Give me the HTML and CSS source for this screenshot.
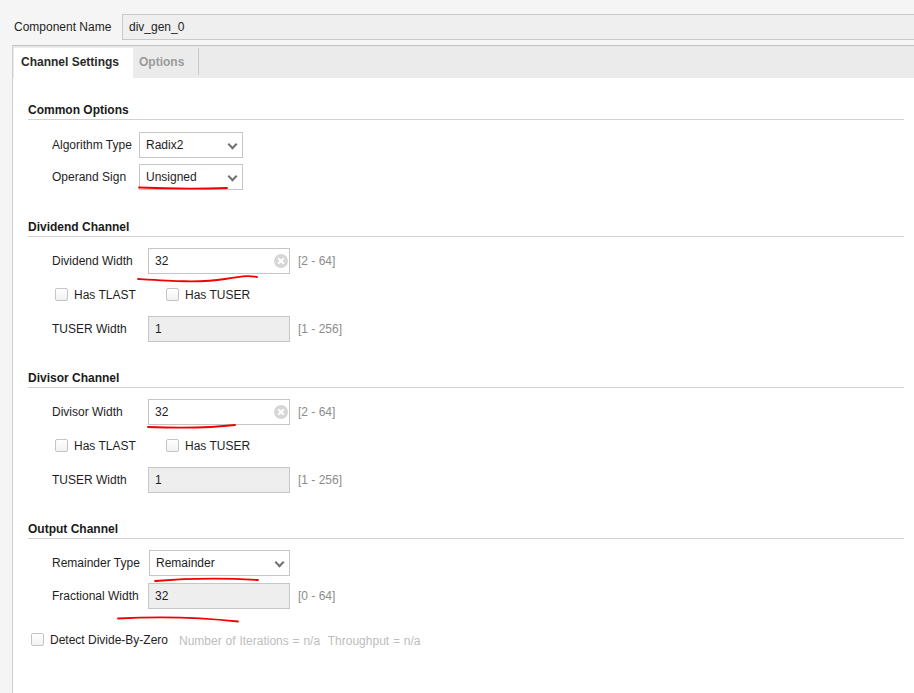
FILE: index.html
```html
<!DOCTYPE html>
<html lang="en">
<head>
    <meta charset="UTF-8">
    <title>div_gen_0</title>
    <link rel="stylesheet" href="styles.css">
</head>
<body>
    <div class="name-row">
        <span class="name-label">Component Name</span>
        <div class="name-field">div_gen_0</div>
    </div>

    <div class="panel">
        <div class="tabs">
            <div class="tab active">Channel Settings</div>
            <div class="tab">Options</div>
        </div>

        <div class="content">
            <div class="section first">
                <div class="section-title">Common Options</div>
                <div class="fields lw-87">
                    <div class="row">
                        <span class="label">Algorithm Type</span>
                        <div class="select small">Radix2<span class="chev"></span></div>
                    </div>
                    <div class="row">
                        <span class="label">Operand Sign</span>
                        <div class="select small">Unsigned<span class="chev"></span></div>
                    </div>
                </div>
            </div>

            <div class="section">
                <div class="section-title">Dividend Channel</div>
                <div class="fields lw-96">
                    <div class="row">
                        <span class="label">Dividend Width</span>
                        <div class="input">32<span class="clear"></span></div>
                        <span class="range">[2 - 64]</span>
                    </div>
                    <div class="checks">
                        <label class="check"><span class="box"></span>Has TLAST</label>
                        <label class="check"><span class="box"></span>Has TUSER</label>
                    </div>
                    <div class="row">
                        <span class="label">TUSER Width</span>
                        <div class="input disabled">1</div>
                        <span class="range">[1 - 256]</span>
                    </div>
                </div>
            </div>

            <div class="section">
                <div class="section-title">Divisor Channel</div>
                <div class="fields lw-96">
                    <div class="row">
                        <span class="label">Divisor Width</span>
                        <div class="input">32<span class="clear"></span></div>
                        <span class="range">[2 - 64]</span>
                    </div>
                    <div class="checks">
                        <label class="check"><span class="box"></span>Has TLAST</label>
                        <label class="check"><span class="box"></span>Has TUSER</label>
                    </div>
                    <div class="row">
                        <span class="label">TUSER Width</span>
                        <div class="input disabled">1</div>
                        <span class="range">[1 - 256]</span>
                    </div>
                </div>
            </div>

            <div class="section">
                <div class="section-title">Output Channel</div>
                <div class="fields lw-96">
                    <div class="row">
                        <span class="label">Remainder Type</span>
                        <div class="select wide">Remainder<span class="chev"></span></div>
                    </div>
                    <div class="row tight">
                        <span class="label">Fractional Width</span>
                        <div class="input disabled">32</div>
                        <span class="range">[0 - 64]</span>
                    </div>
                </div>
            </div>

            <div class="detect">
                <label class="check"><span class="box"></span>Detect Divide-By-Zero</label>
                <span class="info">Number of Iterations = n/a&nbsp;&nbsp;Throughput = n/a</span>
            </div>
        </div>
    </div>

    <!-- red pen marks drawn over the screenshot -->
    <svg class="marks" width="914" height="693" viewBox="0 0 914 693">
        <path d="M139 187.5 Q 185 189.5 227 188"/>
        <path d="M138 279 C 170 281 200 283 225 279 S 250 276 257 277"/>
        <path d="M148 427 C 180 428 210 428 235 425"/>
        <path d="M155 581 Q 205 577 258 580"/>
        <path d="M118 618.5 Q 180 615 238 621.5"/>
    </svg>
</body>
</html>
```

FILE: styles.css
```css
body {
    margin: 0;
    height: 693px;
    overflow: hidden;
    background-color: #f5f5f5;
    font-family: "Liberation Sans", Arial, sans-serif;
    font-size: 12px;
    color: #1e1e1e;
    display: flex;
    flex-direction: column;
}
.name-row {
    display: flex;
    align-items: center;
    padding: 14px 0 0 14px;
}
.name-label {
    width: 108px;
}
.name-field {
    flex-grow: 1;
    margin-right: -10px;
    height: 26px;
    box-sizing: border-box;
    line-height: 24px;
    padding-left: 6px;
    background-color: #efefef;
    border: 1px solid #c8c8c8;
}
.panel {
    flex-grow: 1;
    margin: 5px 0 0 12px;
    border-left: 1px solid #cfcfcf;
    border-top: 1px solid #c4c4c4;
    display: flex;
    flex-direction: column;
}
.tabs {
    height: 32px;
    display: flex;
    align-items: flex-start;
    background-color: #ebebeb;
    border-top: 1px solid #e4e4e4;
    box-sizing: border-box;
    padding: 1px 0 0 1px;
}
.tab {
    height: 27px;
    line-height: 28px;
    padding: 0 6px;
    font-weight: bold;
    color: #9a9a9a;
    border-right: 1px solid #c8c8c8;
    width: 53px;
}
.tab.active {
    height: 30px;
    line-height: 28px;
    width: 112px;
    padding: 0 0 0 7px;
    color: #2a2a2a;
    background-color: #fff;
    border-right: none;
}
.content {
    flex-grow: 1;
    background-color: #fff;
    padding: 24px 10px 0 15px;
}
.section {
    margin-top: 28px;
}
.section.first {
    margin-top: 0;
}
.section-title {
    font-weight: bold;
    line-height: 14px;
    padding: 1px 0 2px;
    border-bottom: 1px solid #d2d2d2;
    color: #1a1a1a;
}
.fields {
    padding: 11px 0 0 24px;
}
.section.first .fields {
    padding: 12px 0 1px 24px;
}
.row {
    display: flex;
    align-items: center;
    height: 26px;
    margin-top: 6px;
}
.row:first-child {
    margin-top: 0;
}
.row.tight {
    margin-top: 7px;
}
.lw-87 .label {
    width: 87px;
}
.lw-96 .label {
    width: 96px;
}
.select, .input {
    position: relative;
    height: 26px;
    box-sizing: border-box;
    line-height: 24px;
    padding-left: 6px;
    border: 1px solid #c6c6c6;
    background-color: #fff;
}
.select.small {
    width: 104px;
}
.select.wide {
    width: 141px;
    margin-left: 1px;
}
.input {
    width: 142px;
}
.input.disabled {
    background-color: #eeeeee;
}
.chev {
    position: absolute;
    right: 6px;
    top: 8px;
    width: 5px;
    height: 5px;
    border-right: 2px solid #707070;
    border-bottom: 2px solid #707070;
    transform: rotate(45deg);
}
.clear {
    position: absolute;
    right: 1px;
    top: 5px;
    width: 14px;
    height: 14px;
    border-radius: 50%;
    background-color: #d6d6d6;
}
.clear::before, .clear::after {
    content: "";
    position: absolute;
    left: 3px;
    top: 6px;
    width: 8px;
    height: 2px;
    background-color: #fff;
    transform: rotate(45deg);
}
.clear::after {
    transform: rotate(-45deg);
}
.range {
    margin-left: 8px;
    color: #8c8c8c;
}
.checks {
    display: flex;
    height: 13px;
    margin: 14px 0 15px 3px;
}
.check {
    display: flex;
    align-items: center;
    height: 13px;
}
.checks .check {
    width: 111px;
}
.box {
    width: 13px;
    height: 13px;
    box-sizing: border-box;
    border: 1px solid #c4c4c4;
    border-radius: 2px;
    background: linear-gradient(#ffffff, #f2f2f2);
    margin-right: 6px;
}
.detect {
    display: flex;
    align-items: center;
    margin: 22px 0 0 3px;
}
.info {
    margin-left: 11px;
    padding-top: 3px;
    color: #bdbdbd;
    word-spacing: 0.5px;
}
.marks {
    position: absolute;
    left: 0;
    top: 0;
    pointer-events: none;
}
.marks path {
    fill: none;
    stroke: #f20000;
    stroke-width: 1.8;
    stroke-linecap: round;
}
```
